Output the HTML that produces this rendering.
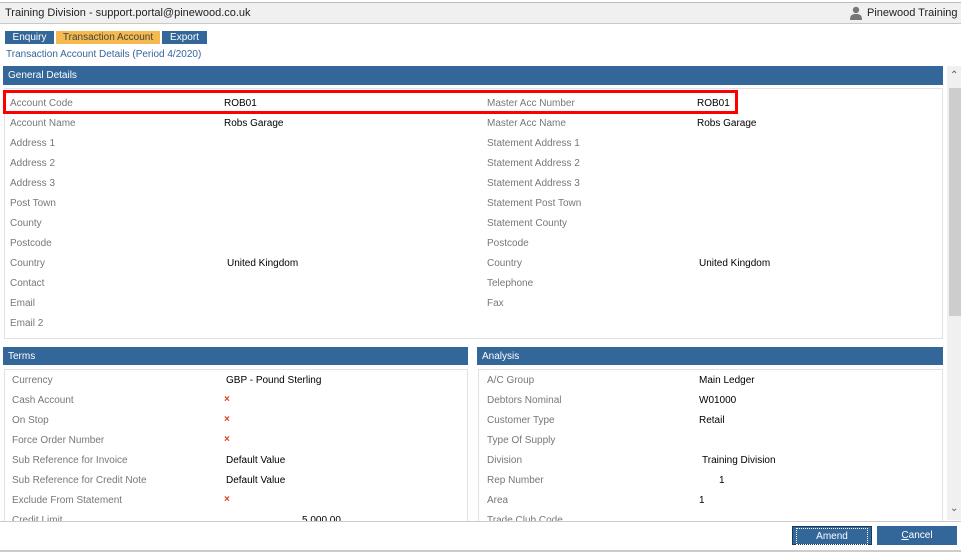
<!DOCTYPE html>
<html><head><style>
*{margin:0;padding:0;box-sizing:border-box}
body{width:961px;height:552px;overflow:hidden;background:#fff;font-family:"Liberation Sans",Tahoma,sans-serif;font-size:10px;color:#000;position:relative}
.a{position:absolute;white-space:nowrap}
.l{color:#777}
.bar{position:absolute;background:#336699;color:#fff;font-size:10px;padding-left:5px;line-height:19px}
.x{color:#e0401a;font-weight:bold;font-size:10px}
</style></head><body>
<div class="a" style="left:0;top:2px;width:961px;height:22px;background:#f0f0f0;border-top:1px solid #bbb;border-bottom:1px solid #c8c8c8"></div>
<div class="a" style="left:5px;top:7px;font-size:11px;color:#222">Training Division - support.portal@pinewood.co.uk</div>
<svg class="a" style="left:849px;top:6px" width="14" height="14" viewBox="0 0 14 14"><circle cx="7" cy="4" r="3.2" fill="#777"/><path d="M1 14 C1 9 3 8 7 8 C11 8 13 9 13 14Z" fill="#777"/></svg>
<div class="a" style="left:867px;top:7px;font-size:11px;color:#222">Pinewood Training</div>
<div class="a" style="left:5px;top:31px;width:49px;height:13px;background:#336699;color:#fff;text-align:center;line-height:13px">Enquiry</div>
<div class="a" style="left:56px;top:31px;width:104px;height:13px;background:#f5b94f;color:#444;text-align:center;line-height:13px">Transaction Account</div>
<div class="a" style="left:162px;top:31px;width:45px;height:13px;background:#336699;color:#fff;text-align:center;line-height:13px">Export</div>
<div class="a" style="left:6px;top:49px;color:#336699">Transaction Account Details (Period 4/2020)</div>
<div class="bar" style="left:3px;top:66px;width:940px;height:19px">General Details</div>
<div class="a" style="left:947px;top:66px;width:14px;height:454px;background:#f0f0f0"></div>
<div class="a" style="left:949px;top:88px;width:12px;height:228px;background:#cdcdcd"></div>
<div class="a" style="left:950px;top:70px;color:#555;font-size:10px">&#8963;</div>
<div class="a" style="left:950px;top:503px;color:#555;font-size:10px">&#8964;</div>
<div class="a" style="left:4px;top:88px;width:939px;height:251px;border:1px solid #e2e2e2"></div>
<div class="a" style="left:3px;top:90px;width:735px;height:24px;border:3px solid #f00"></div>
<div class="a l" style="left:10px;top:98px">Account Code</div><div class="a" style="left:224px;top:98px">ROB01</div>
<div class="a l" style="left:487px;top:98px">Master Acc Number</div><div class="a" style="left:697px;top:98px">ROB01</div>
<div class="a l" style="left:10px;top:118px">Account Name</div><div class="a" style="left:224px;top:118px">Robs Garage</div>
<div class="a l" style="left:487px;top:118px">Master Acc Name</div><div class="a" style="left:697px;top:118px">Robs Garage</div>
<div class="a l" style="left:10px;top:138px">Address 1</div><div class="a l" style="left:487px;top:138px">Statement Address 1</div>
<div class="a l" style="left:10px;top:158px">Address 2</div><div class="a l" style="left:487px;top:158px">Statement Address 2</div>
<div class="a l" style="left:10px;top:178px">Address 3</div><div class="a l" style="left:487px;top:178px">Statement Address 3</div>
<div class="a l" style="left:10px;top:198px">Post Town</div><div class="a l" style="left:487px;top:198px">Statement Post Town</div>
<div class="a l" style="left:10px;top:218px">County</div><div class="a l" style="left:487px;top:218px">Statement County</div>
<div class="a l" style="left:10px;top:238px">Postcode</div><div class="a l" style="left:487px;top:238px">Postcode</div>
<div class="a l" style="left:10px;top:258px">Country</div><div class="a" style="left:227px;top:258px">United Kingdom</div>
<div class="a l" style="left:487px;top:258px">Country</div><div class="a" style="left:699px;top:258px">United Kingdom</div>
<div class="a l" style="left:10px;top:278px">Contact</div><div class="a l" style="left:487px;top:278px">Telephone</div>
<div class="a l" style="left:10px;top:298px">Email</div><div class="a l" style="left:487px;top:298px">Fax</div>
<div class="a l" style="left:10px;top:318px">Email 2</div>
<div class="bar" style="left:3px;top:347px;width:465px;height:18px">Terms</div>
<div class="bar" style="left:477px;top:347px;width:466px;height:18px">Analysis</div>
<div class="a" style="left:4px;top:369px;width:464px;height:160px;border:1px solid #e2e2e2"></div>
<div class="a" style="left:478px;top:369px;width:465px;height:160px;border:1px solid #e2e2e2"></div>
<div class="a l" style="left:12px;top:375px">Currency</div><div class="a" style="left:226px;top:375px">GBP - Pound Sterling</div>
<div class="a l" style="left:12px;top:395px">Cash Account</div><div class="a x" style="left:224px;top:394px">×</div>
<div class="a l" style="left:12px;top:415px">On Stop</div><div class="a x" style="left:224px;top:414px">×</div>
<div class="a l" style="left:12px;top:435px">Force Order Number</div><div class="a x" style="left:224px;top:434px">×</div>
<div class="a l" style="left:12px;top:455px">Sub Reference for Invoice</div><div class="a" style="left:226px;top:455px">Default Value</div>
<div class="a l" style="left:12px;top:475px">Sub Reference for Credit Note</div><div class="a" style="left:226px;top:475px">Default Value</div>
<div class="a l" style="left:12px;top:495px">Exclude From Statement</div><div class="a x" style="left:224px;top:494px">×</div>
<div class="a l" style="left:12px;top:515px">Credit Limit</div><div class="a" style="left:302px;top:515px">5,000.00</div>
<div class="a l" style="left:487px;top:375px">A/C Group</div><div class="a" style="left:699px;top:375px">Main Ledger</div>
<div class="a l" style="left:487px;top:395px">Debtors Nominal</div><div class="a" style="left:699px;top:395px">W01000</div>
<div class="a l" style="left:487px;top:415px">Customer Type</div><div class="a" style="left:699px;top:415px">Retail</div>
<div class="a l" style="left:487px;top:435px">Type Of Supply</div>
<div class="a l" style="left:487px;top:455px">Division</div><div class="a" style="left:702px;top:455px">Training Division</div>
<div class="a l" style="left:487px;top:475px">Rep Number</div><div class="a" style="left:719px;top:475px">1</div>
<div class="a l" style="left:487px;top:495px">Area</div><div class="a" style="left:699px;top:495px">1</div>
<div class="a l" style="left:487px;top:515px">Trade Club Code</div>
<div class="a" style="left:0;top:521px;width:961px;height:31px;background:#fff;border-top:1px solid #ccc;border-bottom:2px solid #ccc"></div>
<div class="a" style="left:792px;top:526px;width:80px;height:19px;background:#336699;border:1px solid #1a3a5c;color:#fff;text-align:center;line-height:15px"><span style="display:block;margin:1px 3px;border:1px dotted #fff">Amend</span></div>
<div class="a" style="left:877px;top:526px;width:80px;height:19px;background:#336699;color:#fff;text-align:center;line-height:19px"><u>C</u>ancel</div>
</body></html>
